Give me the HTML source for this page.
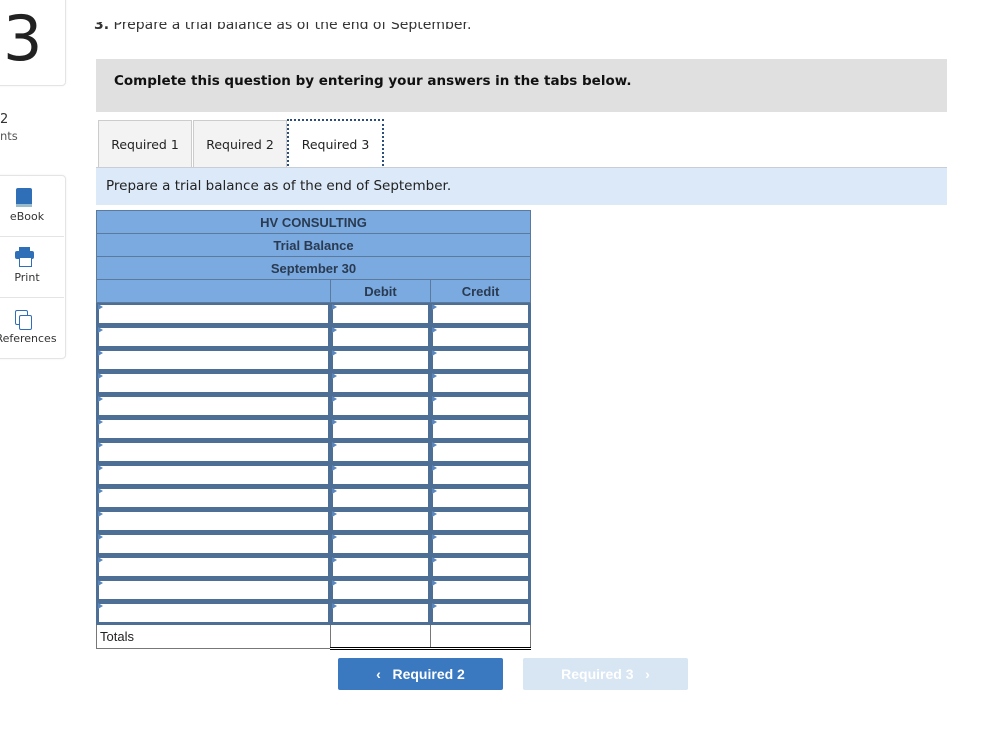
<!DOCTYPE html>
<html><head><style>
body{margin:0;width:986px;height:744px;background:#fff;font-family:"Liberation Sans",sans-serif;position:relative;overflow:hidden}
.a{position:absolute}
.card{position:absolute;left:-10px;width:74px;background:#fff;border:1px solid #e4e4e4;border-radius:4px;box-shadow:0 0 2px rgba(0,0,0,.06)}
.side{font-family:"DejaVu Sans",sans-serif;font-size:11px;color:#333;text-align:center;width:74px;left:-10px}
.tab{position:absolute;top:120px;height:46px;border:1px solid #ccc;border-bottom:none;background:#f3f3f3;font-family:"DejaVu Sans",sans-serif;font-size:12.5px;color:#222;line-height:48px;text-align:center}
table{border-collapse:collapse;position:absolute;left:96px;top:210px;width:435px}
td{padding:0;height:22px;font-size:13.5px;color:#1f2f44}
.h td{background:#7aaae0;border:1px solid #5c7a9c;text-align:center;font-weight:bold;color:#2a3a50;font-size:13px}
.r td{background:#4d6f96;border:1px solid #4d6f96;position:relative}
.r td div{position:absolute;left:2px;right:2px;top:2px;bottom:2px;background:#fff}
.r td i{position:absolute;left:1px;top:1px;border-left:5px solid #5a86bb;border-top:3px solid transparent;border-bottom:3px solid transparent;z-index:2}
</style></head><body>
<div class="card" style="top:-10px;height:94px"></div>
<div class="a" style="left:3px;top:3px;font-size:62px;font-family:'DejaVu Sans',sans-serif;color:#222;line-height:72px">3</div>
<div class="a" style="left:0;top:112px;font-family:'DejaVu Sans';font-size:13px;color:#333">2</div>
<div class="a" style="left:0;top:129px;font-family:'DejaVu Sans';font-size:11.5px;color:#555">nts</div>
<div class="card" style="top:175px;height:182px"></div>
<div class="a" style="left:-10px;top:236px;width:74px;border-top:1px solid #e4e4e4"></div>
<div class="a" style="left:-10px;top:297px;width:74px;border-top:1px solid #e4e4e4"></div>
<div class="a" style="left:16px;top:188px;width:16px;height:19px;background:#2f6fb7;border-radius:2px"></div>
<div class="a" style="left:16px;top:204px;width:16px;height:3px;background:#9bc"></div>
<div class="a side" style="top:210px">eBook</div>
<div class="a" style="left:15px;top:251px;width:19px;height:8px;background:#2f6fb7;border-radius:2px"></div>
<div class="a" style="left:19px;top:247px;width:11px;height:4px;background:#2f6fb7"></div>
<div class="a" style="left:19px;top:257px;width:11px;height:8px;background:#fff;border:1px solid #2f6fb7"></div>
<div class="a side" style="top:271px">Print</div>
<div class="a" style="left:15px;top:310px;width:11px;height:13px;border:1.5px solid #2f6fb7;border-radius:2px"></div>
<div class="a" style="left:19px;top:315px;width:11px;height:13px;border:1.5px solid #2f6fb7;background:#fff;border-radius:2px"></div>
<div class="a side" style="top:332px;left:-14px;width:80px">References</div>

<div class="a" style="left:94px;top:22px;height:14px;width:500px;overflow:hidden"><div class="a" style="left:0;top:-9px;font-family:'DejaVu Sans';font-size:14px;color:#333;line-height:24px;white-space:nowrap"><b>3.</b> Prepare a trial balance as of the end of September.</div></div>
<div class="a" style="left:96px;top:59px;width:851px;height:53px;background:#e0e0e0"></div>
<div class="a" style="left:114px;top:73px;font-family:'DejaVu Sans';font-weight:bold;font-size:13.5px;color:#111">Complete this question by entering your answers in the tabs below.</div>
<div class="tab" style="left:98px;width:92px">Required 1</div>
<div class="tab" style="left:193px;width:92px">Required 2</div>
<div class="tab" style="left:287px;top:119px;width:93px;height:47px;background:#fff;border:2px dotted #2b4f7a">Required 3</div>
<div class="a" style="left:96px;top:167px;width:851px;height:37px;background:#dbe9f8;border-top:1px solid #c6cfd8"></div>
<div class="a" style="left:106px;top:178px;font-family:'DejaVu Sans';font-size:13.5px;color:#222">Prepare a trial balance as of the end of September.</div>

<table>
<tr class="h"><td colspan="3">HV CONSULTING</td></tr>
<tr class="h"><td colspan="3">Trial Balance</td></tr>
<tr class="h"><td colspan="3">September 30</td></tr>
<tr class="h"><td style="width:233px"></td><td style="width:99px">Debit</td><td>Credit</td></tr>
<tr class="r"><td><i></i><div></div></td><td><i></i><div></div></td><td><i></i><div></div></td></tr>
<tr class="r"><td><i></i><div></div></td><td><i></i><div></div></td><td><i></i><div></div></td></tr>
<tr class="r"><td><i></i><div></div></td><td><i></i><div></div></td><td><i></i><div></div></td></tr>
<tr class="r"><td><i></i><div></div></td><td><i></i><div></div></td><td><i></i><div></div></td></tr>
<tr class="r"><td><i></i><div></div></td><td><i></i><div></div></td><td><i></i><div></div></td></tr>
<tr class="r"><td><i></i><div></div></td><td><i></i><div></div></td><td><i></i><div></div></td></tr>
<tr class="r"><td><i></i><div></div></td><td><i></i><div></div></td><td><i></i><div></div></td></tr>
<tr class="r"><td><i></i><div></div></td><td><i></i><div></div></td><td><i></i><div></div></td></tr>
<tr class="r"><td><i></i><div></div></td><td><i></i><div></div></td><td><i></i><div></div></td></tr>
<tr class="r"><td><i></i><div></div></td><td><i></i><div></div></td><td><i></i><div></div></td></tr>
<tr class="r"><td><i></i><div></div></td><td><i></i><div></div></td><td><i></i><div></div></td></tr>
<tr class="r"><td><i></i><div></div></td><td><i></i><div></div></td><td><i></i><div></div></td></tr>
<tr class="r"><td><i></i><div></div></td><td><i></i><div></div></td><td><i></i><div></div></td></tr>
<tr class="r"><td><i></i><div></div></td><td><i></i><div></div></td><td><i></i><div></div></td></tr>
<tr><td style="border:1px solid #777;padding-left:3px;color:#222;font-size:13px">Totals</td><td style="border:1px solid #777;border-bottom:3px double #000"></td><td style="border:1px solid #777;border-bottom:3px double #000"></td></tr>
</table>

<div class="a" style="left:338px;top:658px;width:165px;height:32px;background:#3a78c0;border-radius:2px;color:#fff;font-weight:bold;font-size:14px;line-height:32px;text-align:center">‹&nbsp;&nbsp;&nbsp;Required 2</div>
<div class="a" style="left:523px;top:658px;width:165px;height:32px;background:#d8e5f3;border-radius:2px;color:#fff;font-weight:bold;font-size:14px;line-height:32px;text-align:center">Required 3&nbsp;&nbsp;&nbsp;›</div>
</body></html>
